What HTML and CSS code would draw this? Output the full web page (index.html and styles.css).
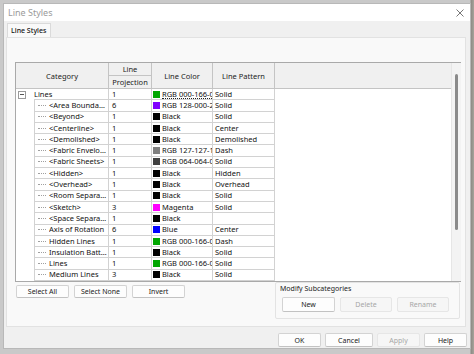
FILE: index.html
```html
<!DOCTYPE html>
<html lang="en">
<head>
  <meta charset="UTF-8">
  <meta name="viewport" content="width=device-width, initial-scale=1.0">
  <title>Line Styles</title>
  <link rel="stylesheet" href="styles.css">
</head>
<body>
  <div class="dialog">
    <div class="titlebar">
      <span class="title">Line Styles</span>
      <svg class="close" width="8" height="8" viewBox="0 0 8 8">
        <path d="M0.5 0.5 L7.5 7.5 M7.5 0.5 L0.5 7.5" stroke="#666" stroke-width="0.9" fill="none"/>
      </svg>
    </div>
    <div class="tabs">
      <div class="tab">Line Styles</div>
    </div>
    <div class="panel">
      <div class="grid_wrap">
        <div class="grid">
          <div class="head">
            <div class="h h_cat">Category</div>
            <div class="h h_line">Line</div>
            <div class="h h_proj">Projection</div>
            <div class="h h_color">Line Color</div>
            <div class="h h_pat">Line Pattern</div>
            <div class="h h_fill"></div>
          </div>
          <div class="body">
            <div class="row">
              <div class="c_cat"><span class="gutter"><span class="minus"></span></span><span class="node root"><span class="lbl">Lines</span></span></div>
              <div class="c c_proj">1</div>
              <div class="c c_color focus"><span class="sw" style="background:#00a600"></span><span class="ctxt">RGB 000-166-000</span></div>
              <div class="c c_pat">Solid</div>
            </div>
            <div class="row">
              <div class="c_cat"><span class="gutter"></span><span class="node"><span class="lbl">&lt;Area Boundary&gt;</span></span></div>
              <div class="c c_proj">6</div>
              <div class="c c_color"><span class="sw" style="background:#8000ff"></span><span class="ctxt">RGB 128-000-255</span></div>
              <div class="c c_pat">Solid</div>
            </div>
            <div class="row">
              <div class="c_cat"><span class="gutter"></span><span class="node"><span class="lbl">&lt;Beyond&gt;</span></span></div>
              <div class="c c_proj">1</div>
              <div class="c c_color"><span class="sw" style="background:#000"></span><span class="ctxt">Black</span></div>
              <div class="c c_pat">Solid</div>
            </div>
            <div class="row">
              <div class="c_cat"><span class="gutter"></span><span class="node"><span class="lbl">&lt;Centerline&gt;</span></span></div>
              <div class="c c_proj">1</div>
              <div class="c c_color"><span class="sw" style="background:#000"></span><span class="ctxt">Black</span></div>
              <div class="c c_pat">Center</div>
            </div>
            <div class="row">
              <div class="c_cat"><span class="gutter"></span><span class="node"><span class="lbl">&lt;Demolished&gt;</span></span></div>
              <div class="c c_proj">1</div>
              <div class="c c_color"><span class="sw" style="background:#000"></span><span class="ctxt">Black</span></div>
              <div class="c c_pat">Demolished</div>
            </div>
            <div class="row">
              <div class="c_cat"><span class="gutter"></span><span class="node"><span class="lbl">&lt;Fabric Envelope&gt;</span></span></div>
              <div class="c c_proj">1</div>
              <div class="c c_color"><span class="sw" style="background:#7f7f7f"></span><span class="ctxt">RGB 127-127-127</span></div>
              <div class="c c_pat">Dash</div>
            </div>
            <div class="row">
              <div class="c_cat"><span class="gutter"></span><span class="node"><span class="lbl">&lt;Fabric Sheets&gt;</span></span></div>
              <div class="c c_proj">1</div>
              <div class="c c_color"><span class="sw" style="background:#404040"></span><span class="ctxt">RGB 064-064-064</span></div>
              <div class="c c_pat">Solid</div>
            </div>
            <div class="row">
              <div class="c_cat"><span class="gutter"></span><span class="node"><span class="lbl">&lt;Hidden&gt;</span></span></div>
              <div class="c c_proj">1</div>
              <div class="c c_color"><span class="sw" style="background:#000"></span><span class="ctxt">Black</span></div>
              <div class="c c_pat">Hidden</div>
            </div>
            <div class="row">
              <div class="c_cat"><span class="gutter"></span><span class="node"><span class="lbl">&lt;Overhead&gt;</span></span></div>
              <div class="c c_proj">1</div>
              <div class="c c_color"><span class="sw" style="background:#000"></span><span class="ctxt">Black</span></div>
              <div class="c c_pat">Overhead</div>
            </div>
            <div class="row">
              <div class="c_cat"><span class="gutter"></span><span class="node"><span class="lbl">&lt;Room Separation&gt;</span></span></div>
              <div class="c c_proj">1</div>
              <div class="c c_color"><span class="sw" style="background:#000"></span><span class="ctxt">Black</span></div>
              <div class="c c_pat">Solid</div>
            </div>
            <div class="row">
              <div class="c_cat"><span class="gutter"></span><span class="node"><span class="lbl">&lt;Sketch&gt;</span></span></div>
              <div class="c c_proj">3</div>
              <div class="c c_color"><span class="sw" style="background:#ff00ff"></span><span class="ctxt">Magenta</span></div>
              <div class="c c_pat">Solid</div>
            </div>
            <div class="row">
              <div class="c_cat"><span class="gutter"></span><span class="node"><span class="lbl">&lt;Space Separation&gt;</span></span></div>
              <div class="c c_proj">1</div>
              <div class="c c_color"><span class="sw" style="background:#000"></span><span class="ctxt">Black</span></div>
              <div class="c c_pat"></div>
            </div>
            <div class="row">
              <div class="c_cat"><span class="gutter"></span><span class="node"><span class="lbl">Axis of Rotation</span></span></div>
              <div class="c c_proj">6</div>
              <div class="c c_color"><span class="sw" style="background:#0000ff"></span><span class="ctxt">Blue</span></div>
              <div class="c c_pat">Center</div>
            </div>
            <div class="row">
              <div class="c_cat"><span class="gutter"></span><span class="node"><span class="lbl">Hidden Lines</span></span></div>
              <div class="c c_proj">1</div>
              <div class="c c_color"><span class="sw" style="background:#00a600"></span><span class="ctxt">RGB 000-166-000</span></div>
              <div class="c c_pat">Dash</div>
            </div>
            <div class="row">
              <div class="c_cat"><span class="gutter"></span><span class="node"><span class="lbl">Insulation Batting Lines</span></span></div>
              <div class="c c_proj">1</div>
              <div class="c c_color"><span class="sw" style="background:#000"></span><span class="ctxt">Black</span></div>
              <div class="c c_pat">Solid</div>
            </div>
            <div class="row">
              <div class="c_cat"><span class="gutter"></span><span class="node"><span class="lbl">Lines</span></span></div>
              <div class="c c_proj">1</div>
              <div class="c c_color"><span class="sw" style="background:#00a600"></span><span class="ctxt">RGB 000-166-000</span></div>
              <div class="c c_pat">Solid</div>
            </div>
            <div class="row">
              <div class="c_cat"><span class="gutter"></span><span class="node"><span class="lbl">Medium Lines</span></span></div>
              <div class="c c_proj">3</div>
              <div class="c c_color"><span class="sw" style="background:#000"></span><span class="ctxt">Black</span></div>
              <div class="c c_pat">Solid</div>
            </div>
          </div>
        </div>
        <div class="vscroll"><div class="thumb"></div></div>
      </div>
      <div class="lower">
        <div class="sel_btns">
          <button type="button" class="btn">Select All</button>
          <button type="button" class="btn">Select None</button>
          <button type="button" class="btn">Invert</button>
        </div>
        <div class="group">
          <div class="group_label">Modify Subcategories</div>
          <div class="group_btns">
            <button type="button" class="btn gbtn">New</button>
            <button type="button" class="btn gbtn" disabled>Delete</button>
            <button type="button" class="btn gbtn" disabled>Rename</button>
          </div>
        </div>
      </div>
    </div>
    <div class="footer">
      <button type="button" class="btn fbtn">OK</button>
      <button type="button" class="btn fbtn cancel">Cancel</button>
      <button type="button" class="btn fbtn" disabled>Apply</button>
      <button type="button" class="btn fbtn">Help</button>
    </div>
  </div>
</body>
</html>
```
FILE: styles.css
```css
:root {
  --line: #d2d2d2;
  --row: 11.3px;
}

* {
  box-sizing: border-box;
  font-family: "Noto Sans", "Open Sans", Arial, sans-serif;
}

body {
  margin: 0;
  width: 474px;
  height: 354px;
  overflow: hidden;
  background: linear-gradient(90deg, #c9c9c9 0, #c9c9c9 470px, #8d8a84 471px, #a8a49c 474px);
}

.dialog {
  width: 468px;
  height: 346px;
  margin: 3px 0 0 3px;
  display: flex;
  flex-direction: column;
  background: #f0f0f0;
  border: 1px solid #b8b8b8;
}

.titlebar {
  height: 17px;
  display: flex;
  justify-content: space-between;
  align-items: center;
  padding: 0 6px 0 4px;
  background: #fff;
}

.title {
  font-size: 9px;
  color: #9b9b9b;
}

.tabs {
  height: 16px;
  padding: 2px 0 0 3px;
  display: flex;
}

.tab {
  padding: 0 4px 0 3px;
  font-size: 7px;
  font-weight: 500;
  line-height: 13px;
  white-space: nowrap;
  color: #111;
  background: #f9f9f9;
  border: 1px solid #dadada;
  border-bottom: 0;
}

.panel {
  height: 290px;
  margin: 0 4px 0 2px;
  padding: 24px 4px 0 8px;
  background: #f9f9f9;
  border: 1px solid #e2e2e2;
}

.grid_wrap {
  display: flex;
  height: 220px;
  border: 1px solid #a9a9a9;
  border-right: 0;
  background: #fff;
}

.grid {
  width: 435px;
  overflow: hidden;
}

.head {
  display: grid;
  grid-template-columns: 93px 43px 61px 62px 1fr;
  grid-template-rows: 13px 13px;
  background: #f0f0f0;
}

.h {
  display: flex;
  align-items: center;
  justify-content: center;
  font-size: 7.5px;
  color: #222;
  border-right: 1px solid #c4c4c4;
  border-bottom: 1px solid #c4c4c4;
}

.h_cat { grid-row: 1 / span 2; }
.h_color { grid-column: 3; grid-row: 1 / span 2; }
.h_pat { grid-column: 4; grid-row: 1 / span 2; }
.h_fill { grid-column: 5; grid-row: 1 / span 2; border-right: 0; }
.h_line { grid-column: 2; grid-row: 1; }
.h_proj { grid-column: 2; grid-row: 2; }

.row {
  display: grid;
  grid-template-columns: 93px 43px 61px 62px;
  height: var(--row);
  font-size: 7.5px;
  line-height: 9px;
  color: #111;
}

.c {
  display: flex;
  align-items: center;
  overflow: hidden;
  white-space: nowrap;
  border-right: 1px solid var(--line);
  border-bottom: 1px solid var(--line);
}

.c_proj { padding-left: 3px; }
.c_pat { padding-left: 2px; }

.c_color { padding-left: 1px; }

.sw {
  flex: none;
  width: 7px;
  height: 7px;
  margin-right: 2px;
}

.focus .ctxt {
  border-bottom: 1px dotted #222;
  line-height: 8px;
}

.c_cat {
  display: flex;
  border-right: 1px solid var(--line);
  min-width: 0;
}

.gutter {
  flex: none;
  width: 18px;
  display: flex;
  align-items: center;
  padding-left: 2px;
}

.minus {
  width: 8px;
  height: 8px;
  border: 1px solid #9a9a9a;
  background: #fff;
  display: flex;
  align-items: center;
  justify-content: center;
}

.minus::after {
  content: "";
  width: 4px;
  height: 1px;
  background: #555;
}

.node {
  flex: 1;
  min-width: 0;
  display: flex;
  align-items: center;
  border-left: 1px solid var(--line);
  border-bottom: 1px solid var(--line);
}

.node::before {
  content: "";
  flex: none;
  width: 8px;
  margin: 0 3px 0 3px;
  border-top: 1px dotted #a0a0a0;
}

.lbl {
  min-width: 0;
  overflow: hidden;
  white-space: nowrap;
  text-overflow: ellipsis;
  padding-right: 1px;
}

.node.root {
  border-left: 0;
}

.node.root::before {
  display: none;
}

.vscroll {
  width: 10px;
  flex: none;
  background: #f3f3f3;
  border-left: 1px solid #e6e6e6;
}

.thumb {
  width: 3px;
  height: 156px;
  margin: 11px 0 0 3px;
  border-radius: 2px;
  background: #8a8a8a;
}

.lower {
  display: flex;
  justify-content: space-between;
  height: 45px;
}

.sel_btns {
  display: flex;
  gap: 5px;
  padding: 3px 0 0 1px;
}

.btn {
  height: 13px;
  width: 53px;
  padding: 0;
  font-size: 7px;
  color: #1a1a1a;
  background: #fdfdfd;
  border: 1px solid #d3d3d3;
  border-bottom-color: #c2c2c2;
  border-radius: 2px;
}

.btn:disabled {
  color: #a6a6a6;
  background: #f6f6f6;
  border-color: #e6e6e6;
}

.group {
  width: 185px;
  height: 37px;
  margin-right: 1px;
  padding: 1px 0 0 4px;
  border: 1px solid #e3e3e3;
  border-radius: 2px;
}

.group_label {
  font-size: 7px;
  color: #222;
  line-height: 10px;
}

.group_btns {
  display: flex;
  gap: 5px;
  margin-top: 3px;
  padding-left: 2px;
}

.gbtn {
  height: 15px;
  width: 53px;
}

.gbtn:disabled {
  width: 52px;
}

.footer {
  flex: 1;
  display: flex;
  justify-content: flex-end;
  align-items: flex-start;
  gap: 4px;
  padding: 6px 3px 0 0;
}

.fbtn {
  width: 43px;
  height: 14px;
}

.fbtn.cancel {
  width: 48px;
}
```
